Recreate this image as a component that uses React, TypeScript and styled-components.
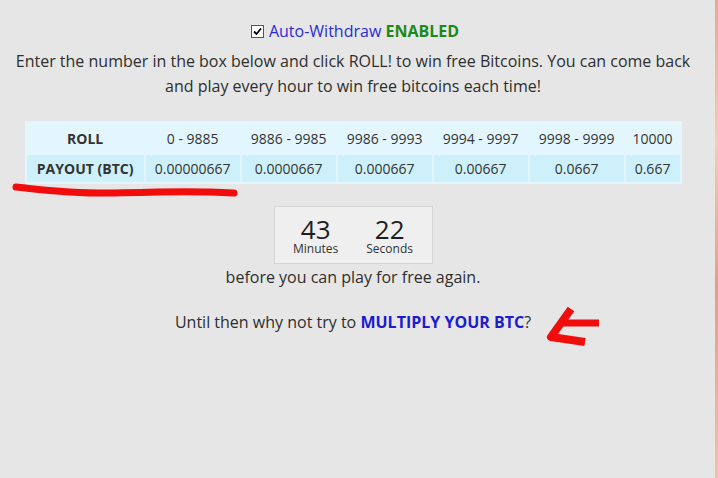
import React from 'react';
import styled, { createGlobalStyle } from 'styled-components';

const GlobalStyle = createGlobalStyle`
  html, body {
    margin: 0;
    padding: 0;
    background: #e6e6e6;
  }
  body {
    font-family: 'Open Sans', 'Liberation Sans', sans-serif;
    color: #2e2e2e;
  }
`;

const Page = styled.div`
  display: flex;
  width: 718px;
  height: 478px;
  overflow: hidden;
`;

const Content = styled.div`
  position: relative;
  width: 706px;
  display: flex;
  flex-direction: column;
  align-items: center;
  padding-top: 19px;
`;

const Filler = styled.div`
  flex: 1;
`;

const Edge = styled.div`
  width: 3px;
  background: linear-gradient(180deg, #e7a98a 0%, #f2cdb8 30%, #e3a07e 60%, #efc2a8 100%);
`;

const WithdrawLine = styled.div`
  display: flex;
  align-items: center;
  gap: 5px;
  font-size: 16px;
  line-height: 25px;
  margin-left: 4px;
`;

const Check = styled.span`
  width: 11px;
  height: 11px;
  border: 1px solid #555;
  background: #fff;
  display: flex;
  align-items: center;
  justify-content: center;
`;

const BlueLink = styled.span`
  color: #2b2bd6;
`;

const Enabled = styled.b`
  color: #1a8a1a;
  font-weight: 700;
`;

const Intro = styled.p`
  margin: 5px 0 0;
  font-size: 16px;
  line-height: 25px;
  text-align: center;
  width: 700px;
`;

const Table = styled.table`
  margin-top: 22px;
  width: 657px;
  background: #e4f6fd;
  border-collapse: separate;
  border-spacing: 2px;
  font-size: 14px;
  color: #333;
`;

const Cell = styled.td<{ $bold?: boolean; $fill?: boolean }>`
  text-align: center;
  padding: 0 4px;
  height: ${p => (p.$fill ? '27px' : '30px')};
  font-weight: ${p => (p.$bold ? 700 : 400)};
  background: ${p => (p.$fill ? '#cdf0fb' : 'transparent')};
  white-space: nowrap;
`;

const Timer = styled.div`
  margin-top: 22px;
  width: 159px;
  height: 58px;
  border: 1px solid #d6d6d6;
  background: #efefef;
  display: flex;
  justify-content: center;
  gap: 28px;
  padding-top: 9px;
  box-sizing: border-box;
`;

const Unit = styled.div`
  display: flex;
  flex-direction: column;
  align-items: center;
`;

const Count = styled.span`
  font-size: 26px;
  line-height: 27px;
  color: #1e1e1e;
`;

const Label = styled.span`
  font-size: 12px;
  line-height: 12px;
  color: #333;
`;

const Line = styled.p<{ $gap: number }>`
  margin: ${p => p.$gap}px 0 0;
  font-size: 16px;
  line-height: 25px;
  text-align: center;
`;

const Multiply = styled.b`
  color: #1c1ccf;
  font-weight: 700;
`;

const Scribble = styled.svg`
  position: absolute;
  left: 0;
  top: 0;
  pointer-events: none;
`;

const rolls = ['0 - 9885', '9886 - 9985', '9986 - 9993', '9994 - 9997', '9998 - 9999', '10000'];
const payouts = ['0.00000667', '0.0000667', '0.000667', '0.00667', '0.0667', '0.667'];

export default function App() {
  return (
    <Page>
      <GlobalStyle />
      <Content>
        <WithdrawLine>
          <Check>
            <svg width="9" height="9" viewBox="0 0 9 9">
              <path d="M1 4.5 L3.5 7 L8 1.5" stroke="#000" strokeWidth="1.8" fill="none" />
            </svg>
          </Check>
          <span>
            <BlueLink>Auto-Withdraw</BlueLink> <Enabled>ENABLED</Enabled>
          </span>
        </WithdrawLine>
        <Intro>
          Enter the number in the box below and click ROLL! to win free Bitcoins. You can come back
          and play every hour to win free bitcoins each time!
        </Intro>
        <Table>
          <tbody>
            <tr>
              <Cell $bold>ROLL</Cell>
              {rolls.map(r => (
                <Cell key={r}>{r}</Cell>
              ))}
            </tr>
            <tr>
              <Cell $bold $fill>PAYOUT (BTC)</Cell>
              {payouts.map(p => (
                <Cell key={p} $fill>{p}</Cell>
              ))}
            </tr>
          </tbody>
        </Table>
        <Timer>
          <Unit>
            <Count>43</Count>
            <Label>Minutes</Label>
          </Unit>
          <Unit>
            <Count>22</Count>
            <Label>Seconds</Label>
          </Unit>
        </Timer>
        <Line $gap={1}>before you can play for free again.</Line>
        <Line $gap={20}>
          Until then why not try to <Multiply>MULTIPLY YOUR BTC</Multiply>?
        </Line>
        <Scribble width="706" height="478">
          <path
            d="M16 187 C45 190 75 194 115 193 C150 192 180 191 210 192 L234 193"
            stroke="#f20d0d"
            strokeWidth="7"
            fill="none"
            strokeLinecap="round"
          />
          <path
            d="M571 309 L551 337 L585 342"
            stroke="#f20d0d"
            strokeWidth="8"
            fill="none"
            strokeLinejoin="round"
          />
          <path d="M563 323 L599 323" stroke="#f20d0d" strokeWidth="7" fill="none" />
        </Scribble>
        <Filler />
      </Content>
      <Filler />
      <Edge />
    </Page>
  );
}
